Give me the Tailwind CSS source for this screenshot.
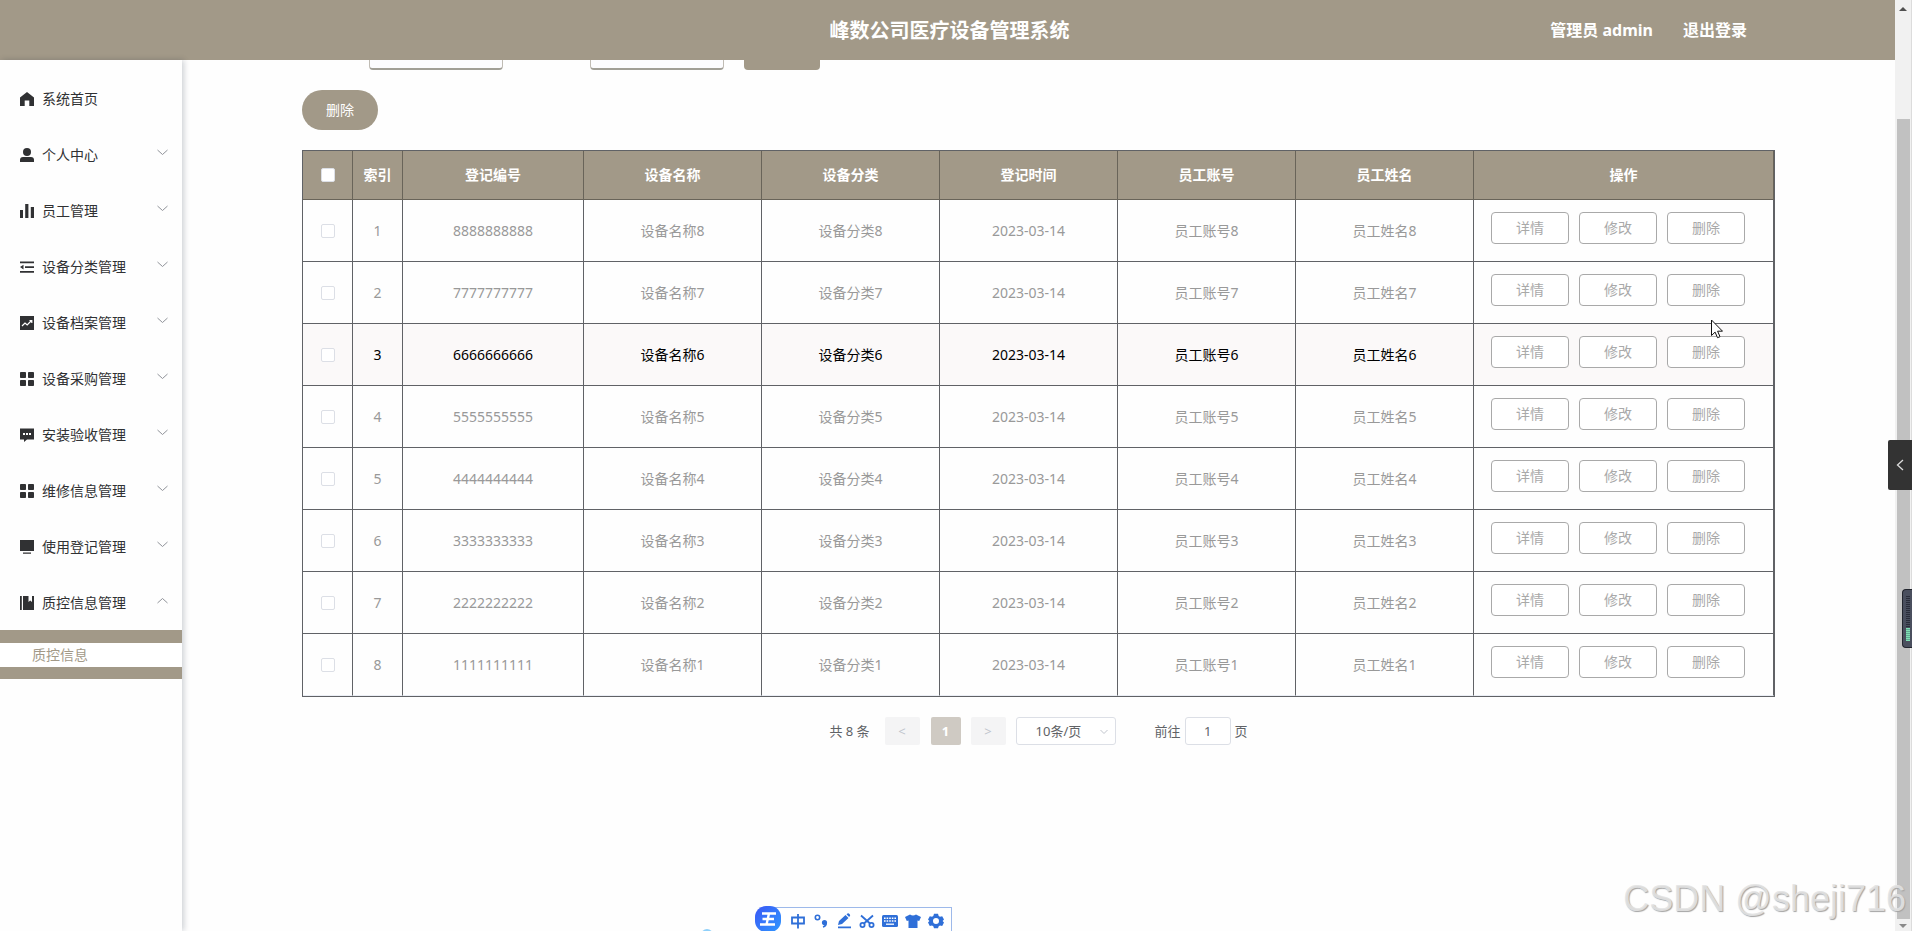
<!DOCTYPE html>
<html lang="zh-CN">
<head>
    <meta charset="utf-8">
    <title>峰数公司医疗设备管理系统</title>
    <script src="https://cdn.jsdelivr.net/npm/@tailwindcss/browser@4"></script>
</head>
<body class="bg-[#fefefe] text-sm text-[#303133] font-['Noto_Sans','Noto_Sans_CJK_SC',sans-serif]">
    <div class="relative flex h-screen overflow-hidden">
        <div class="flex min-w-0 flex-1 flex-col">
            <header class="grid h-[60px] shrink-0 grid-cols-[1fr_auto_1fr] items-center bg-[#a29988] font-bold text-white">
                <h1 class="col-start-2 pt-0.5 pl-1 text-xl">峰数公司医疗设备管理系统</h1>
                <div class="flex justify-end gap-[30px] pr-[148px] text-base">
                    <span>管理员 admin</span>
                    <a href="#">退出登录</a>
                </div>
            </header>
            <div class="flex min-h-0 flex-1">
                <aside class="w-[182px] shrink-0 bg-[#fefefe] pt-[10px] shadow-[2px_0_6px_rgba(0,21,41,0.2)]">
                    <nav id="menu"></nav>
                    <div class="bg-[#a29988] pt-[13px] pb-3">
                        <a href="#" class="block h-6 bg-white pl-8 leading-6 text-[#a29988]">质控信息</a>
                    </div>
                </aside>
                <main class="min-w-0 flex-1 overflow-hidden px-[120px]">
                    <form class="-mt-[30px] flex pl-[67px]">
                        <input type="text" aria-label="设备名称" class="h-10 w-[134px] rounded border border-b-2 border-[#c0bcb4] border-b-[#a19f96] bg-[#fcfcfe] px-2">
                        <input type="text" aria-label="员工姓名" class="ml-[87px] h-10 w-[134px] rounded border border-b-2 border-[#c0bcb4] border-b-[#a19f96] bg-[#fcfcfe] px-2">
                        <button type="button" aria-label="查询" class="ml-5 h-10 w-[76px] rounded bg-[#a29988]"></button>
                    </form>
                    <button type="button" class="my-5 block h-10 w-[76px] rounded-full bg-[#a29988] text-white">删除</button>
                    <div class="border border-[#606266]">
                        <table class="w-full table-fixed border-separate border-spacing-0 text-center">
                            <thead>
                                <tr class="h-[49px] bg-[#a29988] text-white *:border-r *:border-b *:border-[#696459]">
                                    <th class="w-[50px] p-0"><input type="checkbox" aria-label="全选" class="mx-auto block size-[14px] appearance-none rounded-xs border border-[#dcdfe6] bg-white"></th>
                                    <th class="w-[50px] p-0">索引</th>
                                    <th class="w-[181px]">登记编号</th>
                                    <th>设备名称</th>
                                    <th>设备分类</th>
                                    <th>登记时间</th>
                                    <th>员工账号</th>
                                    <th>员工姓名</th>
                                    <th class="w-[300px]">操作</th>
                                </tr>
                            </thead>
                            <tbody id="rows"></tbody>
                        </table>
                    </div>
                    <div class="mt-5 flex items-center justify-center text-[13px] text-[#606266]">
                        <span>共 8 条</span>
                        <button type="button" disabled class="ml-[15px] h-7 w-[35px] rounded-xs bg-[#f4f4f5] text-[#c0c4cc]">&lt;</button>
                        <button type="button" class="ml-[11px] h-7 w-[30px] rounded-xs bg-[#cfcac3] font-bold text-white">1</button>
                        <button type="button" disabled class="ml-[10px] h-7 w-[35px] rounded-xs bg-[#f4f4f5] text-[#c0c4cc]">&gt;</button>
                        <div class="relative ml-[10px]">
                            <select aria-label="每页条数" class="block h-7 w-[100px] appearance-none rounded-[3px] border border-[#dcdfe6] bg-white pl-[19px]">
                                <option>10条/页</option>
                            </select>
                            <svg class="pointer-events-none absolute top-[11px] right-2 h-2 w-2" viewBox="0 0 8 8" fill="none" stroke="#c0c4cc"><path d="M0.5 2 4 5.500 7.500 2"/></svg>
                        </div>
                        <label for="goto" class="ml-[39px]">前往</label>
                        <input id="goto" type="text" value="1" class="mx-1 h-7 w-[46px] rounded-[3px] border border-[#dcdfe6] bg-white text-center">
                        <span>页</span>
                    </div>
                </main>
            </div>
        </div>

        <!-- scrollbar -->
        <div class="flex w-[17px] shrink-0 flex-col items-center border-r border-[#dcdcdc] bg-[#f1f1f1]">
            <svg class="my-[5px] h-2 w-2" viewBox="0 0 8 8"><path d="M4 2 8 6H0Z" fill="#505050"/></svg>
            <div class="mt-[101px] w-[13px] flex-1 bg-[#c1c1c1]"></div>
            <svg class="my-[2px] h-2 w-2" viewBox="0 0 8 8"><path d="M0 3h8L4 7Z" fill="#8a8a8a"/></svg>
        </div>

        <!-- side drawer handle -->
        <button type="button" aria-label="展开" class="absolute top-[440px] right-0 flex h-[50px] w-6 items-center justify-center rounded-l-xs bg-[#333]">
            <svg class="h-3 w-3" viewBox="0 0 12 12" fill="none" stroke="#ddd" stroke-width="1.300"><path d="M9 1 3.500 6 9 11"/></svg>
        </button>

        <!-- level meter -->
        <div class="absolute top-[589px] right-0 flex h-[59px] w-[10px] flex-col rounded-l border border-r-0 border-[#22252e] bg-[#4a4f5e] py-[6px] pr-[2px] pl-[3px]">
            <div class="flex-1 bg-[repeating-linear-gradient(#2a2d3a_0_1px,#4a4f5e_1px_2px)]"></div>
            <div class="h-[13px] bg-[repeating-linear-gradient(#7fe0b4_0_1px,#5fa890_1px_2px)]"></div>
        </div>

        <!-- input method bar -->
        <div class="absolute top-[929px] left-[701px] h-3 w-3 rounded-full bg-[#8fd0fa]"></div>
        <div class="absolute top-[906px] left-[755px] flex h-[30px] text-[#2f6fd8]">
            <div class="z-10 flex h-[26px] w-[26px] items-center justify-center rounded-[11px] bg-gradient-to-br from-[#3a55f5] to-[#2f97ff]">
                <svg class="h-4 w-[18px]" viewBox="0 0 18 16" fill="none" stroke="#fff" stroke-width="2.400"><path d="M3 2.500h14M3.500 8H15M1 13.500h15M10 2.500 7.500 13.500"/></svg>
            </div>
            <div class="-ml-3 mt-px flex h-8 items-start gap-[7px] border border-[#9db9ea] bg-white pt-[5px] pr-[7px] pl-5">
                <svg class="size-4" viewBox="0 0 16 16" fill="none" stroke="currentColor" stroke-width="1.800"><path d="M2 4.500h12v6H2zM8 1v14.500"/></svg>
                <svg class="size-4" viewBox="0 0 16 16" fill="none" stroke="currentColor" stroke-width="1.600"><circle cx="4.500" cy="4.500" r="2.200"/><circle cx="11.500" cy="9.500" r="1.800" fill="currentColor"/><path d="M13 9.500Q13.500 13 10 14"/></svg>
                <svg class="size-4" viewBox="0 0 16 16" fill="currentColor"><path d="m2 12 1-4 6.500-6 3 3-6.500 6zM10.500 1.200l1-.8q1-.5 2 .5t.4 2l-.8 1zM2 13.500h13V15.300H2z"/></svg>
                <svg class="size-4" viewBox="0 0 16 16" fill="none" stroke="currentColor" stroke-width="1.800"><circle cx="3.500" cy="12" r="2.100"/><circle cx="12.500" cy="12" r="2.100"/><path d="M2 2.500 11 10.500M14 2.500 5 10.500"/></svg>
                <svg class="size-4" viewBox="0 0 16 16"><rect y="2" width="16" height="12" rx="1.500" fill="currentColor"/><path d="M2 5.200h12M2 8h12" stroke="#fff" stroke-width="1.500" stroke-dasharray="1.600 1"/><path d="M4 11.200h8" stroke="#fff" stroke-width="1.300"/></svg>
                <svg class="size-4" viewBox="0 0 16 16" fill="currentColor"><path d="M5 1.500q3 2 6 0l5 2.500-1.800 4-1.700-.6V15h-9V7.400L1.800 8 0 4z"/></svg>
                <svg class="size-4" viewBox="0 0 16 16" fill="currentColor" fill-rule="evenodd"><path d="M6 .8h4l.7 2.100 1.300.8 2.200-.5 1.800 3.300L14.600 8l1.400 1.600-1.800 3.300-2.200-.5-1.300.8-.7 2.100H6l-.7-2.100-1.300-.8-2.200.5L0 9.600 1.400 8 0 6.500l1.800-3.300 2.200.5 1.300-.8zM8 5a3 3 0 1 0 0 6 3 3 0 0 0 0-6z"/></svg>
            </div>
        </div>

        <!-- mouse pointer -->
        <svg class="absolute top-[319px] left-[1711px] h-5 w-3" viewBox="0 0 12 20"><path d="M.5 1v15.500l3.600-3.400 2.400 5.600 2.500-1-2.400-5.500H11.500Z" fill="#fff" stroke="#111"/></svg>

        <div class="pointer-events-none absolute right-[6px] bottom-3 font-['Liberation_Sans',Arial,sans-serif] text-4xl leading-10 text-[#e4e4e4]/90 [text-shadow:1px_1px_1px_#a4a4a4]">CSDN @sheji716</div>
    </div>

    <script>
        const icons = {
            home: '<path d="M7 0 14 5.500V14H9.300V8.500H4.700V14H0V5.500Z"/>',
            user: '<circle cx="7" cy="4" r="4"/><path d="M0 14v-2q0-3 3-3h8q3 0 3 3v2z"/>',
            chart: '<path d="M0 6h3v8H0zM5.200 0h3.200v14H5.200zM10.800 3H14v11h-3.200z"/>',
            fold: '<path d="M0 1.500h14v1.800H0zM5 6.200h9V8H5zM0 11h14v1.800H0zM0 7.100 3.500 4.800v4.600z"/>',
            trend: '<path d="M0 0h14v14H0z"/><path d="m2 10 3-3 2.200 2L11.500 4.500M9.500 4.500h2.300V7" fill="none" stroke="#fff" stroke-width="1.200"/>',
            grid: '<rect width="6" height="6" rx=".8"/><rect x="8" width="6" height="6" rx=".8"/><rect y="8" width="6" height="6" rx=".8"/><rect x="8" y="8" width="6" height="6" rx=".8"/>',
            chat: '<path d="M0 .5h14v11H7L4 14v-2.500H0z"/><path d="M3 5h2v2H3zM6 5h2v2H6zM9 5h2v2H9z" fill="#fff"/>',
            monitor: '<path d="M0 0h14v11H0zM3 12.500h8v1.300H3z"/>',
            book: '<path d="M0 0h1.800v14H0zM3 0h5.500v6l1.700-1.500L12 6V0h2v14H3z"/>'
        };

        const menu = [
            ['home', '系统首页'],
            ['user', '个人中心'],
            ['chart', '员工管理'],
            ['fold', '设备分类管理'],
            ['trend', '设备档案管理'],
            ['grid', '设备采购管理'],
            ['chat', '安装验收管理'],
            ['grid', '维修信息管理'],
            ['monitor', '使用登记管理'],
            ['book', '质控信息管理']
        ];

        document.getElementById('menu').innerHTML = menu.map(([icon, title], i) => {
            const arrow = i === menu.length - 1 ? 'M0.5 6 5.500 1.500 10.500 6' : 'M0.5 1 5.500 5.500 10.500 1';
            return `
                <a href="#" class="flex h-14 items-center pt-px pr-[14px] pl-5">
                    <svg class="mr-2 size-[14px] fill-[#303133]" viewBox="0 0 14 14">${icons[icon]}</svg>
                    <span class="flex-1">${title}</span>
                    ${i > 0 ? `<svg class="mb-1 h-[7px] w-[11px]" viewBox="0 0 11 7" fill="none" stroke="#909399"><path d="${arrow}"/></svg>` : ''}
                </a>
            `;
        }).join('');

        const actions = ['详情', '修改', '删除'];

        // row 3 is shown in its highlighted state
        document.getElementById('rows').innerHTML = [8, 7, 6, 5, 4, 3, 2, 1].map((n, i) => `
            <tr class="h-[62px] *:border-r *:border-b *:border-[#606266] last:*:border-b-[#ebeef5] ${i === 2 ? 'bg-[#fbf9f9] text-black' : 'text-[#999]'}">
                <td class="p-0"><input type="checkbox" aria-label="选择第${i + 1}行" class="mx-auto block size-[14px] appearance-none rounded-xs border border-[#dcdfe6] bg-white"></td>
                <td class="p-0">${i + 1}</td>
                <td>${String(n).repeat(10)}</td>
                <td>设备名称${n}</td>
                <td>设备分类${n}</td>
                <td>2023-03-14</td>
                <td>员工账号${n}</td>
                <td>员工姓名${n}</td>
                <td class="align-top">
                    <div class="flex gap-[10px] pt-3 pl-[17px]">
                        ${actions.map(a => `<button type="button" class="h-8 w-[78px] rounded border border-[#a9a9a9] bg-white text-[#a9a9a9]">${a}</button>`).join('')}
                    </div>
                </td>
            </tr>
        `).join('');
    </script>
</body>
</html>
